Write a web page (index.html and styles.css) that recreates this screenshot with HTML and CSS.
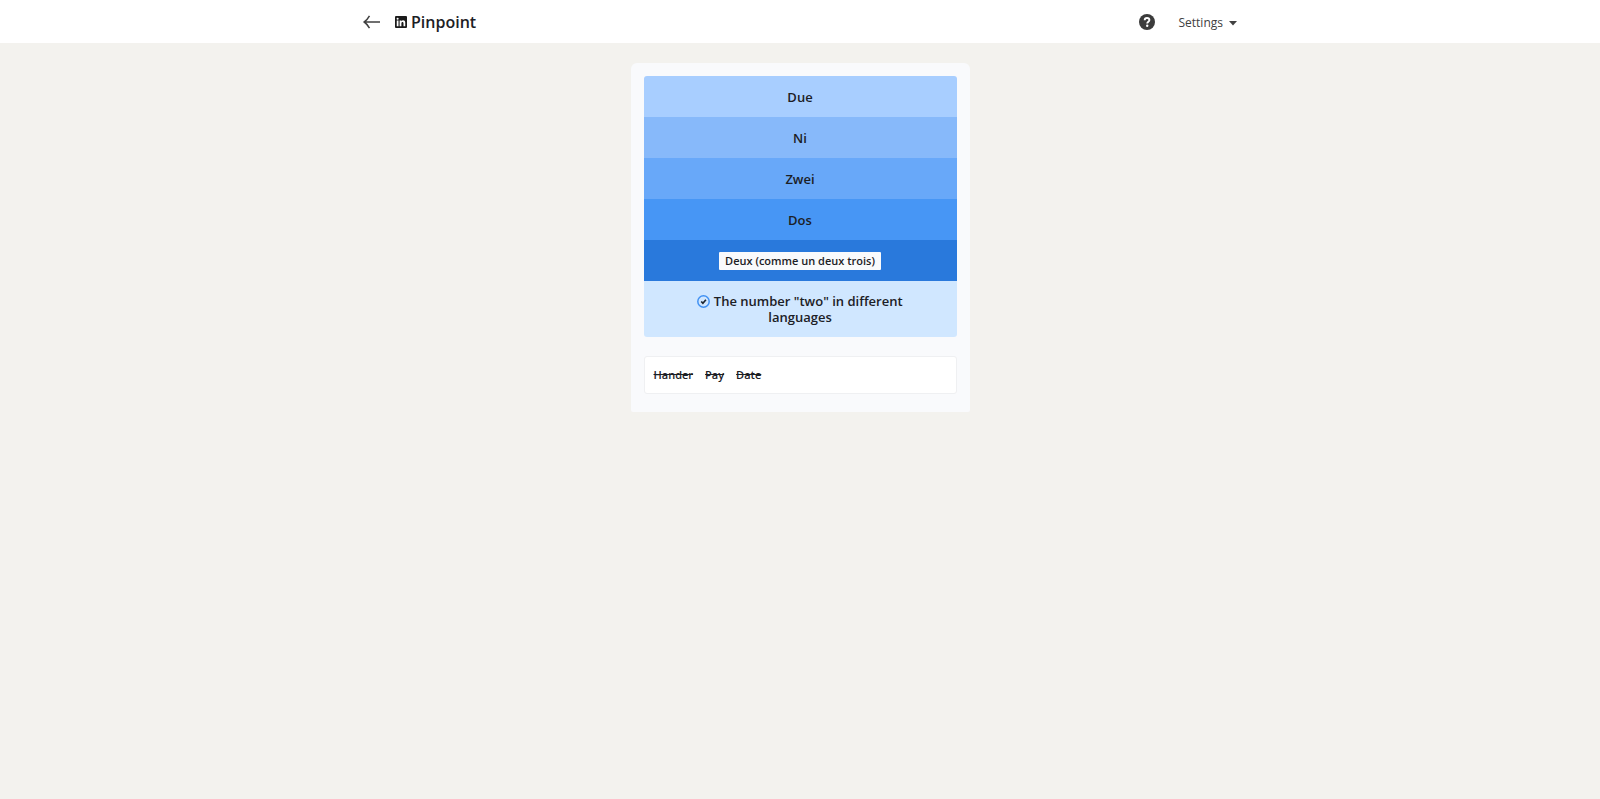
FILE: index.html
```html
<!DOCTYPE html>
<html lang="en">
<head>
<meta charset="utf-8">
<title>Pinpoint</title>
<link rel="stylesheet" href="styles.css">
</head>
<body>
<header class="topbar">
  <div class="topbar-inner">
    <button class="icon-button back" aria-label="Back">
      <svg width="18" height="14" viewBox="0 0 18 14" fill="none" stroke="#404040" stroke-width="1.5"><path d="M17 7H1.5M6.500 .8C5.2 3 3.500 5.500 1.200 7C3.500 8.500 5.200 11 6.500 13.200"/></svg>
    </button>
    <h1 class="brand">
      <svg width="12" height="12" viewBox="0 0 24 24" aria-hidden="true"><path fill="#1b1b1b" fill-rule="evenodd" d="M2 0h20a2 2 0 0 1 2 2v20a2 2 0 0 1-2 2H2a2 2 0 0 1-2-2V2a2 2 0 0 1 2-2zM3.500 9v11.500h3.500V9zM5.250 3.300a2.050 2.050 0 1 0 0 4.100 2.050 2.050 0 0 0 0-4.100zM9.300 9v11.500h3.500v-6c0-1.600.7-2.700 2.200-2.700s2 1.100 2 2.700v6h3.500v-6.900c0-3.300-1.700-4.900-4.200-4.900-1.700 0-2.900.8-3.500 1.900V9z"/></svg>
      <span>Pinpoint</span>
    </h1>
    <button class="icon-button help" aria-label="How to play">
      <svg width="16" height="16" viewBox="0 0 16 16"><circle cx="8" cy="8" r="8" fill="#3b3b3b"/><path d="M5.700 6.200C5.700 4.700 6.700 4 8 4s2.400.7 2.400 2c0 1.600-2.200 1.700-2.200 3.400" fill="none" stroke="#fff" stroke-width="1.900"/><circle cx="8.200" cy="11.700" r="1.200" fill="#fff"/></svg>
    </button>
    <button class="settings">Settings
      <svg width="8" height="5" viewBox="0 0 8 5"><path d="M0 0h8L4 4.500z" fill="#404040"/></svg>
    </button>
  </div>
</header>
<main class="game">
  <ol class="clues">
    <li class="clue clue-1">Due</li>
    <li class="clue clue-2">Ni</li>
    <li class="clue clue-3">Zwei</li>
    <li class="clue clue-4">Dos</li>
    <li class="clue clue-5"><span class="chip">Deux (comme un deux trois)</span></li>
    <li class="answer">
      <p class="answer-text"><svg class="check" width="13" height="13" viewBox="0 0 13 13" aria-hidden="true"><circle cx="6.500" cy="6.500" r="5.700" fill="none" stroke="#4292f3" stroke-width="1.500"/><path d="M4.200 6.500l1.700 1.700 3-3.400" fill="none" stroke="#1b2530" stroke-width="1.700"/></svg> The number "two" in different languages</p>
    </li>
  </ol>
  <ul class="guesses">
    <li><s>Hander</s></li>
    <li><s>Pay</s></li>
    <li><s>Date</s></li>
  </ul>
</main>
</body>
</html>
```
FILE: styles.css
```css
* {
  box-sizing: border-box;
}

body {
  margin: 0;
  background: #f3f2ee;
  color: #1c2025;
  font-family: "Open Sans", "Noto Sans", sans-serif;
  font-size: 13px;
  line-height: 16px;
}

ol,
ul {
  margin: 0;
  padding: 0;
  list-style: none;
}

button {
  padding: 0;
  border: 0;
  background: none;
  font: inherit;
  cursor: pointer;
}

svg {
  display: block;
}

.topbar {
  background: #fff;
}

.topbar-inner {
  display: flex;
  align-items: center;
  max-width: 874px;
  height: 43px;
  margin: 0 auto;
}

.brand {
  display: flex;
  align-items: center;
  gap: 4px;
  margin: 0 auto 0 14px;
  font-size: 16px;
  font-weight: 600;
  line-height: 24px;
}

.settings {
  display: flex;
  align-items: center;
  gap: 6px;
  margin-left: 24px;
  padding-top: 3px;
  color: #404040;
  font-size: 12px;
  font-weight: 500;
}

.game {
  max-width: 339px;
  margin: 20px auto;
  padding: 13px 13px 18px;
  border-radius: 6px 6px 2px 2px;
  background: #f9fafc;
}

.clues {
  overflow: hidden;
  border-radius: 3px;
  font-weight: 600;
  text-align: center;
}

.clue {
  display: flex;
  align-items: center;
  justify-content: center;
  height: 41px;
}

.clue-1 { background: #a8ceff; }
.clue-2 { background: #87b9fa; }
.clue-3 { background: #68a8f9; }
.clue-4 { background: #4796f5; }
.clue-5 { background: #2979dc; }

.chip {
  padding: 1px 6px;
  border-radius: 1px;
  background: #f9fafc;
  font-size: 11px;
}

.answer {
  padding: 12px 50px;
  background: #d0e7ff;
}

.answer-text {
  margin: 0;
}

.check {
  display: inline-block;
  vertical-align: -2px;
}

.guesses {
  display: flex;
  gap: 12px;
  margin-top: 19px;
  padding: 10px 9px;
  border: 1px solid #eff0f2;
  border-radius: 3px;
  background: #fff;
  font-size: 11px;
  font-weight: 600;
}
```
